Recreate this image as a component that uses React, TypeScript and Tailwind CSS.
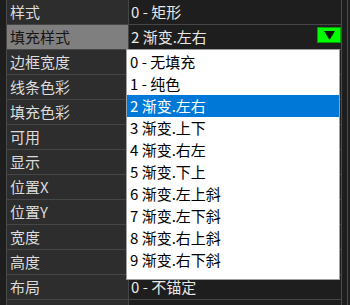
import React from 'react'

// 属性面板：左列名称，右列数值，“填充样式”正在展开下拉
const rows: { label: string; value: string }[] = [
  { label: '样式', value: '0 - 矩形' },
  { label: '填充样式', value: '2 渐变.左右' },
  { label: '边框宽度', value: '' },
  { label: '线条色彩', value: '' },
  { label: '填充色彩', value: '' },
  { label: '可用', value: '' },
  { label: '显示', value: '' },
  { label: '位置X', value: '' },
  { label: '位置Y', value: '' },
  { label: '宽度', value: '' },
  { label: '高度', value: '' },
  { label: '布局', value: '0 - 不锚定' },
  { label: '', value: '' },
]

const options = [
  '0 - 无填充',
  '1 - 纯色',
  '2 渐变.左右',
  '3 渐变.上下',
  '4 渐变.右左',
  '5 渐变.下上',
  '6 渐变.左上斜',
  '7 渐变.左下斜',
  '8 渐变.右上斜',
  '9 渐变.右下斜',
]

const font = { fontFamily: '"Noto Sans CJK SC", "Noto Sans", sans-serif' }

export default function App() {
  const active = 1
  const selected = 2

  return (
    <div
      className="relative w-[350px] h-[305px] overflow-hidden bg-[#1e1e1e] flex text-[15px]"
      style={font}
    >
      {/* 左侧窄条 */}
      <div className="w-[6px] bg-[#1e1e1e] border-r border-[#4a4a4a] box-content" />

      {/* 属性表格 */}
      <div className="w-[334px] flex flex-col border-r border-[#4a4a4a] box-content">
        {rows.map((r, i) => (
          <div key={i} className="flex h-[25px] shrink-0 border-b border-[#464646]">
            <div
              className={`w-[118px] border-r border-[#464646] box-content pl-[3px] leading-[24px] whitespace-nowrap ${
                i === active ? 'bg-[#7f7f7f] text-[#161616]' : 'bg-[#2d2d2d] text-[#dcdcdc]'
              }`}
            >
              {r.label}
            </div>
            <div className="flex-1 flex items-start pl-[2px] leading-[24px] text-[#e8e8e8] bg-[#1e1e1e] whitespace-nowrap">
              <span className="flex-1">{r.value}</span>
              {i === active && (
                <span className="mt-[2px] w-[24px] h-[16px] bg-[#00ff00] border border-[#00a000] flex items-center justify-center">
                  <svg width="11" height="9" viewBox="0 0 11 9">
                    <polygon points="0,0 11,0 5.5,9" fill="#0a1a0a" />
                  </svg>
                </span>
              )}
            </div>
          </div>
        ))}
      </div>

      {/* 滚动条槽 */}
      <div className="w-[5px] bg-[#1e1e1e] border-r border-[#4a4a4a] box-content" />
      <div className="flex-1 bg-[#1e1e1e]" />

      {/* 下拉列表 */}
      <div className="absolute left-[126px] top-[49px] w-[214px] h-[231px] bg-white border border-[#a0a0a0] pt-[1px]">
        {options.map((o, i) => (
          <div
            key={o}
            className={`h-[22px] leading-[22px] pl-[3px] whitespace-nowrap ${
              i === selected ? 'bg-[#0078d7] text-white' : 'text-black'
            }`}
          >
            {o}
          </div>
        ))}
      </div>
    </div>
  )
}
